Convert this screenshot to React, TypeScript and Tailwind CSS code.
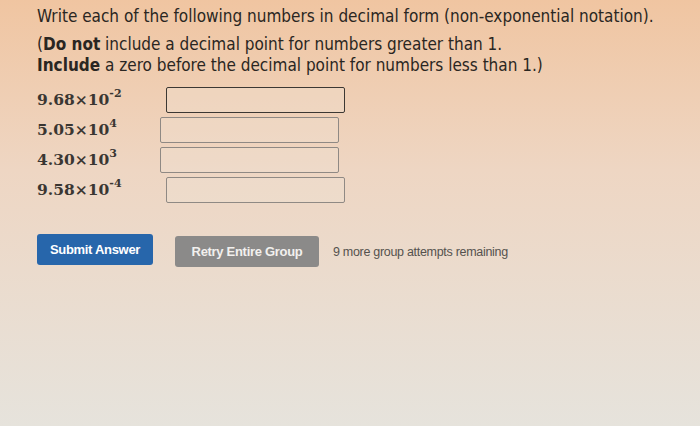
import React from 'react';

const rows = [
  { m: '9.68', e: '-2', shift: 'ml-[41px]' },
  { m: '5.05', e: '4', shift: 'ml-[35px]' },
  { m: '4.30', e: '3', shift: 'ml-[35px]' },
  { m: '9.58', e: '-4', shift: 'ml-[41px]' },
];

const App = () => {
  return (
    <div className="w-[700px] h-[426px] overflow-hidden bg-gradient-to-b from-[#f0c5a1] via-[#eed6c3] via-40% to-[#e6e3dc] text-[#2a2622]">
      <div className="pl-[37px] pt-[5px]">
        <p className="text-[17px] leading-[22px]" style={{ fontFamily: '"DejaVu Sans Condensed", "DejaVu Sans", sans-serif' }}>
          Write each of the following numbers in decimal form (non-exponential notation).
        </p>
        <p className="mt-[7px] text-[17px] leading-[21px]" style={{ fontFamily: '"DejaVu Sans Condensed", "DejaVu Sans", sans-serif' }}>
          (<b>Do not</b> include a decimal point for numbers greater than 1.
          <br />
          <b>Include</b> a zero before the decimal point for numbers less than 1.)
        </p>

        <div className="mt-[11px] flex flex-col gap-[4px]">
          {rows.map((r) => (
            <div key={r.m} className="flex items-center h-[26px]">
              <span className="w-[88px] text-[15.5px] font-bold text-[#3a3632] whitespace-nowrap" style={{ fontFamily: '"DejaVu Serif", serif' }}>
                {r.m}×10<sup className="text-[11px] -top-[0.75em]">{r.e}</sup>
              </span>
              <div className={`${r.shift} w-[179px] h-[26px] border ${r.m === '9.68' ? 'border-[#3c3833] border-[1.5px]' : 'border-[#8f8984]'} rounded-[2px] bg-[#f0e4d8]/30`} />
            </div>
          ))}
        </div>

        <div className="mt-[29px] flex items-center" style={{ fontFamily: '"Liberation Sans", Arial, sans-serif' }}>
          <button className="w-[116px] h-[31px] rounded-[3px] bg-[#2766ab] text-white text-[13px] font-bold tracking-[-0.3px]">
            Submit Answer
          </button>
          <button className="ml-[22px] mt-[4px] w-[144px] h-[31px] rounded-[3px] bg-[#8b8a89] text-[#f2f0ee] text-[13px] font-bold tracking-[-0.3px]">
            Retry Entire Group
          </button>
          <span className="ml-[14px] mt-[6px] text-[12.5px] text-[#55524e] tracking-[-0.3px]">9 more group attempts remaining</span>
        </div>
      </div>
    </div>
  );
};

export default App;
